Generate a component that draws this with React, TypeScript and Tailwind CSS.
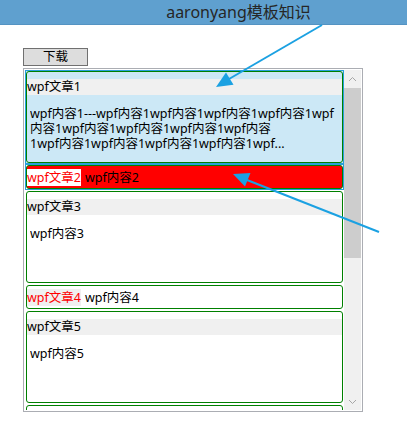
const font = { fontFamily: '"Noto Sans", "Noto Sans CJK SC", sans-serif' };

function Chevron({ down = false }: { down?: boolean }) {
  return (
    <svg width="9" height="6" viewBox="0 0 9 6" className="block">
      <polyline
        points={down ? '1,1 4.5,4.5 8,1' : '1,5 4.5,1.5 8,5'}
        fill="none"
        stroke="#a6a6a6"
        strokeWidth="1"
      />
    </svg>
  );
}

function ExpandedItem({
  title,
  lines,
  selected = false,
}: {
  title?: string;
  lines?: string[];
  selected?: boolean;
}) {
  return (
    <div className={`border ${selected ? 'border-[#26a0da] bg-[#cce8f6]' : 'border-transparent'}`}>
      <div className="h-[92px] overflow-hidden rounded-[3px] border border-[#008000] pt-[7px]">
        <div className="h-4 bg-[#f0f0f0] text-[12.5px] leading-4 text-black">{title}</div>
        <div className="mt-[11px] pl-[3px] text-[12.5px] leading-[15px] text-black">
          {lines?.map((line, i) => (
            <div key={i} className="overflow-hidden whitespace-nowrap">
              {line}
            </div>
          ))}
        </div>
      </div>
    </div>
  );
}

function CollapsedItem({
  title,
  content,
  hot = false,
}: {
  title: string;
  content: string;
  hot?: boolean;
}) {
  return (
    <div className={`border ${hot ? 'border-[#26a0da]' : 'border-transparent'}`}>
      <div
        className={`flex h-6 items-center gap-[4px] rounded-[3px] border border-[#008000] text-[12.5px] ${
          hot ? 'bg-[#ff0000]' : 'bg-white'
        }`}
      >
        <span className={`leading-[17px] text-[#ff0000] ${hot ? 'bg-white' : 'bg-[#f0f0f0]'}`}>{title}</span>
        <span className="leading-[17px] text-black">{content}</span>
      </div>
    </div>
  );
}

export default function App() {
  return (
    <div className="relative h-[429px] w-[407px] overflow-hidden bg-white" style={font}>
      <div className="flex h-[25px] items-center justify-center border-b border-[#5493c2] bg-[#5fa0cf] pl-[70px] text-[16px] text-[#262626]">
        aaronyang模板知识
      </div>

      <div className="pl-[23px] pt-[23px]">
        <button
          type="button"
          className="flex h-[18px] w-[65px] items-center justify-center border border-[#707070] bg-[#dddddd] text-[12.5px] leading-none text-black"
        >
          下载
        </button>

        <div className="mt-[2px] flex h-[344px] w-[340px] border border-[#abadb3] p-px">
          <div className="w-[319px] overflow-hidden">
            <ExpandedItem
              selected
              title="wpf文章1"
              lines={[
                'wpf内容1---wpf内容1wpf内容1wpf内容1wpf内容1wpf',
                '内容1wpf内容1wpf内容1wpf内容1wpf内容',
                '1wpf内容1wpf内容1wpf内容1wpf内容1wpf...',
              ]}
            />
            <CollapsedItem hot title="wpf文章2" content="wpf内容2" />
            <ExpandedItem title="wpf文章3" lines={['wpf内容3']} />
            <CollapsedItem title="wpf文章4" content="wpf内容4" />
            <ExpandedItem title="wpf文章5" lines={['wpf内容5']} />
            {/* next item, only its top edge shows */}
            <ExpandedItem />
          </div>

          <div className="flex w-[17px] flex-col bg-[#f0f0f0]">
            <div className="flex h-[17px] items-center justify-center">
              <Chevron />
            </div>
            <div className="mt-px h-[170px] bg-[#cdcdcd]" />
            <div className="flex-1" />
            <div className="flex h-[17px] items-center justify-center">
              <Chevron down />
            </div>
          </div>
        </div>
      </div>

      {/* callout arrows */}
      <svg className="pointer-events-none absolute inset-0" width="407" height="429" viewBox="0 0 407 429">
        <line x1="322" y1="25" x2="229" y2="79" stroke="#1ba1e2" strokeWidth="2" />
        <polygon points="216,87 233.5,84.7 226,72.5" fill="#1ba1e2" />
        <line x1="379" y1="232" x2="247" y2="180" stroke="#1ba1e2" strokeWidth="2" />
        <polygon points="233,174 250.5,173 245,186.5" fill="#1ba1e2" />
      </svg>
    </div>
  );
}
